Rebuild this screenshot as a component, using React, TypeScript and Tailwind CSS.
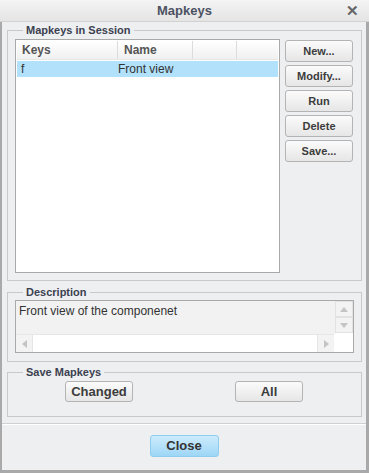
import React from "react";

const font = { fontFamily: '"Liberation Sans", Arial, sans-serif' };

function Btn({ children, className = "" }: { children: React.ReactNode; className?: string }) {
  return (
    <div
      className={
        "flex items-center justify-center rounded-[3px] border border-[#b4b4b4] bg-gradient-to-b from-[#fbfbfb] to-[#e6e6e6] font-bold text-[#3c3c3c] " +
        className
      }
    >
      {children}
    </div>
  );
}

function Group({ label, className = "", children }: { label: string; className?: string; children?: React.ReactNode }) {
  return (
    <div className={"relative border border-[#c9c9c9] " + className}>
      <div className="absolute left-[15px] top-[-8px] bg-[#eeeff1] px-[3px] text-[11px] font-bold leading-[14px] text-[#3b4150]">
        {label}
      </div>
      {children}
    </div>
  );
}

export default function App() {
  return (
    <div className="flex h-[473px] w-[369px] flex-col bg-[#eeeff1]" style={font}>
      {/* title bar */}
      <div className="relative flex h-[22px] shrink-0 items-center justify-center border-b border-[#d2d2d2] bg-gradient-to-b from-[#f4f4f4] to-[#e4e4e4]">
        <span className="text-[13px] font-bold text-[#4b5263]">Mapkeys</span>
        <span className="absolute right-[10px] top-[2px] text-[15px] font-bold leading-[18px] text-[#666]">✕</span>
      </div>
      {/* body */}
      <div className="flex flex-1 flex-col border-b-[3px] border-l-[2px] border-r-[3px] border-[#a9a9a9]">
        <div className="ml-[5px] mr-[4px] mt-[8px] flex flex-col">
          <Group label="Mapkeys in Session" className="h-[251px]">
            <div className="ml-[7px] mt-[8px] flex gap-[5px]">
              <div className="h-[234px] w-[265px] border border-[#a9a9a9] bg-white p-[1px]">
                <div className="flex h-[19px] border-b border-[#e6e6e6] bg-gradient-to-b from-white to-[#f0f0f0] text-[12px] font-bold leading-[19px] text-[#555]">
                  <div className="w-[101px] border-r border-[#dcdcdc] pl-[5px]">Keys</div>
                  <div className="w-[75px] border-r border-[#dcdcdc] pl-[6px]">Name</div>
                  <div className="w-[44px] border-r border-[#dcdcdc]"></div>
                  <div className="flex-1"></div>
                </div>
                <div className="mt-[1px] flex h-[16px] bg-[#b1e1fb] text-[12px] leading-[16px] text-[#333]">
                  <div className="w-[101px] pl-[4px]">f</div>
                  <div>Front view</div>
                </div>
              </div>
              <div className="mt-[1px] flex w-[68px] flex-col gap-[3px] text-[11px]">
                <Btn className="h-[22px]">New...</Btn>
                <Btn className="h-[22px]">Modify...</Btn>
                <Btn className="h-[22px]">Run</Btn>
                <Btn className="h-[22px]">Delete</Btn>
                <Btn className="h-[22px]">Save...</Btn>
              </div>
            </div>
          </Group>

          <Group label="Description" className="mt-[11px] h-[70px]">
            <div className="ml-[7px] mt-[7px] h-[53px] w-[339px] border border-[#a9a9a9] bg-white">
              <div className="flex h-[33px]">
                <div className="flex-1 bg-[#f2f2f2] pl-[3px] pt-[3px] text-[12px] leading-[14px] text-[#333]">
                  Front view of the componenet
                </div>
                <div className="flex w-[18px] flex-col bg-white">
                  <div className="flex h-[16px] items-center justify-center border border-[#e2e2e2] bg-[#f3f3f3]">
                    <svg width="8" height="5" viewBox="0 0 8 5"><path d="M0 5 L4 0 L8 5 Z" fill="#c4c4c4" /></svg>
                  </div>
                  <div className="flex h-[16px] items-center justify-center border border-[#e2e2e2] bg-[#f3f3f3]">
                    <svg width="8" height="5" viewBox="0 0 8 5"><path d="M0 0 L4 5 L8 0 Z" fill="#c4c4c4" /></svg>
                  </div>
                </div>
              </div>
              <div className="flex h-[18px]">
                <div className="flex w-[318px] border-t border-[#e6e6e6] bg-white">
                  <div className="flex w-[17px] items-center justify-center border-r border-[#e6e6e6] bg-[#f3f3f3]">
                    <svg width="5" height="8" viewBox="0 0 5 8"><path d="M5 0 L0 4 L5 8 Z" fill="#c4c4c4" /></svg>
                  </div>
                  <div className="flex-1"></div>
                  <div className="flex w-[17px] items-center justify-center border-l border-[#e6e6e6] bg-[#f3f3f3]">
                    <svg width="5" height="8" viewBox="0 0 5 8"><path d="M0 0 L5 4 L0 8 Z" fill="#c4c4c4" /></svg>
                  </div>
                </div>
                <div className="flex-1 bg-white"></div>
              </div>
            </div>
          </Group>

          <Group label="Save Mapkeys" className="mt-[10px] h-[45px]">
            <div className="mt-[8px] flex text-[13px]">
              <Btn className="ml-[57px] h-[21px] w-[68px]">Changed</Btn>
              <Btn className="ml-[102px] h-[21px] w-[68px]">All</Btn>
            </div>
          </Group>
        </div>
        <div className="mt-[6px] h-[2px] border-t border-[#d0d0d0] bg-white"></div>
        <div className="flex flex-1 items-start justify-center pt-[10px]">
          <div className="flex h-[22px] w-[69px] items-center justify-center rounded-[3px] border border-[#8fcdef] bg-gradient-to-b from-[#cdebfc] to-[#9dd6f6] text-[13px] font-bold text-[#333]">
            Close
          </div>
        </div>
      </div>
    </div>
  );
}
